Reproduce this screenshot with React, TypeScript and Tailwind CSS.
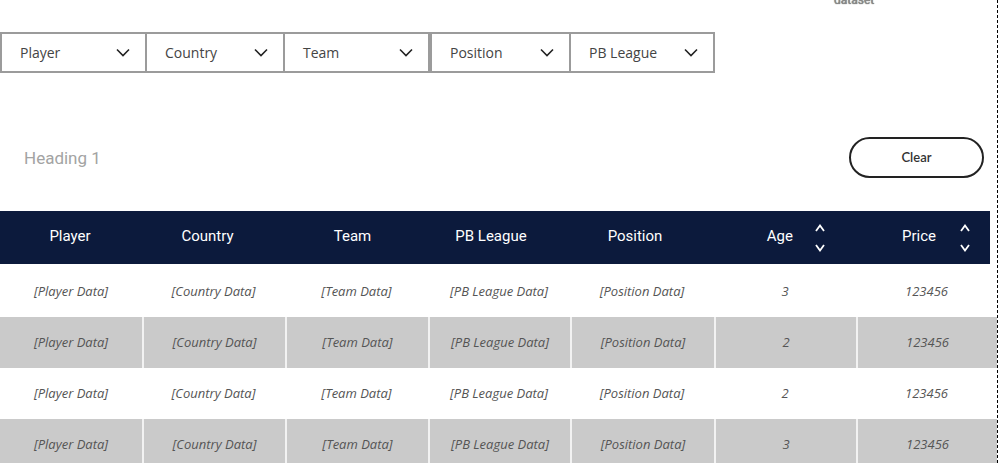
import React from 'react';

// ============================================
// Player table - filters, heading, data grid
// ============================================

const filters = [
  { label: 'Player', width: 'w-[147px]', edge: 'border-l-2' },
  { label: 'Country', width: 'w-[138px]', edge: '' },
  { label: 'Team', width: 'w-[145px]', edge: '' },
  { label: 'Position', width: 'w-[141px]', edge: 'border-l-2' },
  { label: 'PB League', width: 'w-[144px]', edge: '' },
];

const rows = [
  { age: '3', price: '123456' },
  { age: '2', price: '123456' },
  { age: '2', price: '123456' },
  { age: '3', price: '123456' },
];

function Chevron() {
  return (
    <svg width="14" height="9" viewBox="0 0 14 9" fill="none">
      <path d="M1 1.5 7 7.5 13 1.5" stroke="#222" strokeWidth="1.6" />
    </svg>
  );
}

function SortArrows() {
  return (
    <div className="flex flex-col items-center gap-[12px]">
      <svg width="10" height="8" viewBox="0 0 10 8" fill="none">
        <path d="M1 7 5 1.5 9 7" stroke="#fff" strokeWidth="1.8" />
      </svg>
      <svg width="10" height="8" viewBox="0 0 10 8" fill="none">
        <path d="M1 1 5 6.5 9 1" stroke="#fff" strokeWidth="1.8" />
      </svg>
    </div>
  );
}

export default function App() {
  return (
    <div className="relative h-[463px] w-[1000px] overflow-hidden bg-white">
      {/* label peeking in at the top */}
      <span
        className="absolute left-[834px] top-[-7px] text-[12px] leading-[14px] text-[#8a8a8a]"
        style={{ fontFamily: 'Roboto, sans-serif', textShadow: '0 0 1px #444' }}
      >
        dataset
      </span>

      <div className="h-full w-[998px] border-r border-dashed border-black">
        {/* Filters */}
        <div className="flex pt-[32px]" style={{ fontFamily: '"Open Sans", sans-serif' }}>
          {filters.map((f) => (
            <div
              key={f.label}
              className={`${f.width} ${f.edge} flex h-[41px] items-center justify-between border-y-2 border-r-2 border-[#9b9b9b] pl-[18px] pr-[15px] text-[14px] text-[#444]`}
            >
              <span>{f.label}</span>
              <Chevron />
            </div>
          ))}
        </div>

        {/* Heading + clear */}
        <div className="mt-[64px] flex h-[41px] items-center justify-between pl-[24px] pr-[13px]">
          <h1 className="pt-[2px] text-[17px] text-[#a3a3a3]" style={{ fontFamily: 'Roboto, sans-serif' }}>
            Heading 1
          </h1>
          <button
            className="h-[41px] w-[135px] rounded-full border-2 border-[#222] text-[13px] font-semibold text-[#333]"
            style={{ fontFamily: 'Lato, sans-serif' }}
          >
            Clear
          </button>
        </div>

        {/* Table header */}
        <div
          className="mt-[33px] grid h-[53px] w-[990px] grid-cols-[142px_143px_143px_142px_144px_142px_134px] items-center bg-[#0c1a3c] pb-[3px] text-[15px] text-white"
          style={{ fontFamily: 'Roboto, sans-serif' }}
        >
          <div className="pr-[2px] text-center">Player</div>
          <div className="pr-[12px] text-center">Country</div>
          <div className="pr-[8px] text-center">Team</div>
          <div className="pr-[16px] text-center">PB League</div>
          <div className="pr-[14px] text-center">Position</div>
          <div className="flex items-center justify-end gap-[22px] pr-[31px]">
            <span>Age</span>
            <div className="pt-[3px]">
              <SortArrows />
            </div>
          </div>
          <div className="flex items-center justify-end gap-[24px] pr-[20px]">
            <span>Price</span>
            <div className="pt-[3px]">
              <SortArrows />
            </div>
          </div>
        </div>

        {/* Table body */}
        <div
          className="mt-[2px] text-[13px] italic text-[#555]"
          style={{ fontFamily: '"Open Sans", sans-serif' }}
        >
          {rows.map((r, i) => {
            const gray = i % 2 === 1;
            const cells = [
              '[Player Data]',
              '[Country Data]',
              '[Team Data]',
              '[PB League Data]',
              '[Position Data]',
              r.age,
              r.price,
            ];
            return (
              <div
                key={i}
                className={`grid h-[51px] grid-cols-[142px_143px_143px_142px_144px_142px_1fr] ${gray ? 'bg-[#cacaca]' : 'bg-white'}`}
              >
                {cells.map((c, j) => (
                  <div
                    key={j}
                    className={`flex items-center justify-center ${gray && j > 0 ? 'border-l-2 border-[#f2f2f2]' : ''}`}
                  >
                    {c}
                  </div>
                ))}
              </div>
            );
          })}
        </div>
      </div>
    </div>
  );
}
